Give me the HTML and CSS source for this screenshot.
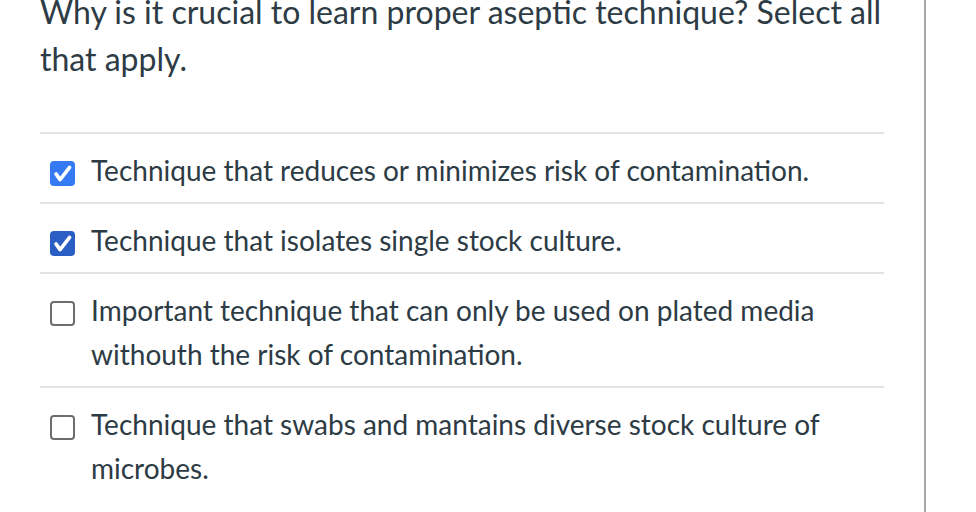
FILE: index.html
```html
<!DOCTYPE html>
<html lang="en">
<head>
<meta charset="utf-8">
<title>Quiz question</title>
<link rel="stylesheet" href="styles.css">
</head>
<body>
<div class="page">
  <div class="main">
    <div class="question">Why is it crucial to learn proper aseptic technique? Select all that apply.</div>
    <div class="answers">
      <div class="answer">
        <span class="box checked light"><svg viewBox="0 0 25 25" width="25" height="25"><path d="M6 12.9L10.1 18.6L19.6 6.4" fill="none" stroke="#fff" stroke-width="3.6" stroke-linecap="round" stroke-linejoin="round"/></svg></span>
        <span class="label">Technique that reduces or minimizes risk of contamination.</span>
      </div>
      <div class="answer">
        <span class="box checked dark"><svg viewBox="0 0 25 25" width="25" height="25"><path d="M6 12.9L10.1 18.6L19.6 6.4" fill="none" stroke="#fff" stroke-width="3.6" stroke-linecap="round" stroke-linejoin="round"/></svg></span>
        <span class="label">Technique that isolates single stock culture.</span>
      </div>
      <div class="answer">
        <span class="box"></span>
        <span class="label">Important technique that can only be used on plated media withouth the risk of contamination.</span>
      </div>
      <div class="answer">
        <span class="box"></span>
        <span class="label">Technique that swabs and mantains diverse stock culture of microbes.</span>
      </div>
    </div>
  </div>
</div>
</body>
</html>
```
FILE: styles.css
```css
html, body {
  margin: 0;
  padding: 0;
  background: #fff;
}
body {
  font-family: Lato, "Liberation Sans", sans-serif;
  color: #2d3b45;
  overflow: hidden;
}
.page {
  display: flex;
  height: 512px;
}
.main {
  width: 844px;
  padding: 0 40px;
  border-right: 2px solid #a9a9a9;
  height: 512px;
}
.question {
  font-size: 32px;
  line-height: 47px;
  margin-top: -12px;
  margin-bottom: 50px;
}
.answer {
  display: flex;
  align-items: flex-start;
  border-top: 2px solid #e2e2e2;
  padding: 14px 0 10px 10px;
}
.box {
  flex: none;
  box-sizing: border-box;
  width: 25px;
  height: 25px;
  border: 2px solid #6d6d6d;
  border-radius: 4px;
  margin-top: 13px;
  margin-right: 16px;
  display: flex;
  background: #fff;
  overflow: hidden;
}
.box.checked {
  border: none;
}
.box.light {
  background: #3579f3;
}
.box.dark {
  background: #2a5ec4;
}
.label {
  font-size: 28px;
  line-height: 44px;
}
```
